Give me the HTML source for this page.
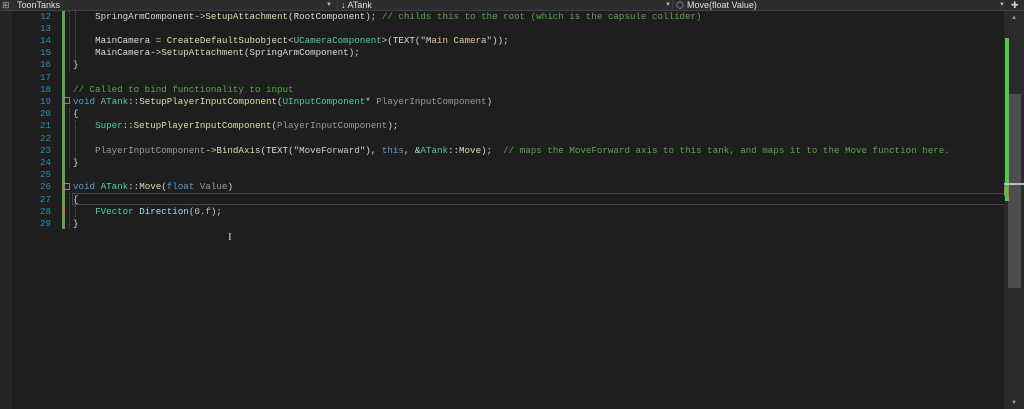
<!DOCTYPE html>
<html><head><meta charset="utf-8"><style>
html,body{margin:0;padding:0;width:1024px;height:409px;overflow:hidden;background:#1e1e1e;position:relative;font-family:"Liberation Sans",sans-serif}
.top{position:absolute;left:0;top:0;width:1024px;height:10px;background:#2d2d30;border-bottom:1px solid #3f3f46;font-size:9px;color:#e0e0e0;line-height:10px}
.top span{position:absolute;top:0}
.gut{position:absolute;left:0;top:11px;width:12px;height:398px;background:#252526}
.ln{position:absolute;left:14px;width:37px;text-align:right;font-family:"Liberation Mono",monospace;font-size:9.2px;color:#2b91af;line-height:12.2px}
.code{position:absolute;left:73px;font-family:"Liberation Mono",monospace;font-size:9.2px;color:#d4d4d4;white-space:pre;line-height:12.2px}
.c{color:#57a64a}.t{color:#4ec9b0}.k{color:#569cd6}.f{color:#dcdcaa}.s{color:#e0c8b0}.p{color:#9a9a9a}.m{color:#b5cea8}.v{color:#dadada}.l{color:#9cdcfe}
.green{position:absolute;left:62px;top:11px;width:3px;height:218px;background:#57a64a}
.box{position:absolute;width:5px;height:5px;border:1px solid #888}
.guide{position:absolute;border-left:1px dotted #555}
</style></head><body>
<div class="top">
<span style="left:2px;color:#aaa">⊞</span><span style="left:17px">ToonTanks</span>
<span style="left:326px;font-size:6px;color:#bbb">▼</span>
<div style="position:absolute;left:337px;top:0;width:1px;height:10px;background:#3f3f46"></div>
<span style="left:341px">↓ ATank</span>
<span style="left:665px;font-size:6px;color:#bbb">▼</span>
<div style="position:absolute;left:672px;top:0;width:1px;height:10px;background:#3f3f46"></div>
<span style="left:676px;color:#aaa">⬡</span><span style="left:687px">Move(float Value)</span>
<span style="left:999px;font-size:6px;color:#bbb">▼</span>
<span style="left:1011px;color:#ccc">✚</span>
</div>
<div class="gut"></div>
<div class="green"></div>
<div style="position:absolute;left:63px;top:205px;width:2px;height:11px;background:#c07a30"></div>
<div class="guide" style="left:69px;top:11px;height:60px"></div>
<div class="guide" style="left:69px;top:108px;height:60px"></div>
<div class="guide" style="left:69px;top:193px;height:36px"></div>
<div class="guide" style="left:75px;top:11px;height:48px"></div>
<div class="guide" style="left:75px;top:120px;height:38px"></div>
<div class="guide" style="left:75px;top:205px;height:12px"></div>
<div class="box" style="left:63px;top:97px"></div>
<div class="box" style="left:63px;top:183px"></div>
<div style="position:absolute;left:72px;top:193px;width:933px;height:10px;border:1px solid #464646"></div>
<div class="ln" style="top:10.5px">12<br>13<br>14<br>15<br>16<br>17<br>18<br>19<br>20<br>21<br>22<br>23<br>24<br>25<br>26<br>27<br>28<br>29</div>
<div class="code" style="top:10.5px">    <span class="v">SpringArmComponent</span>-&gt;<span class="f">SetupAttachment</span>(<span class="v">RootComponent</span>); <span class="c">// childs this to the root (which is the capsule collider)</span>

    <span class="v">MainCamera</span> = <span class="f">CreateDefaultSubobject</span>&lt;<span class="t">UCameraComponent</span>&gt;(<span class="v">TEXT</span>(<span class="s">"Main Camera"</span>));
    <span class="v">MainCamera</span>-&gt;<span class="f">SetupAttachment</span>(<span class="v">SpringArmComponent</span>);
}

<span class="c">// Called to bind functionality to input</span>
<span class="k">void</span> <span class="t">ATank</span>::<span class="f">SetupPlayerInputComponent</span>(<span class="t">UInputComponent</span>* <span class="p">PlayerInputComponent</span>)
{
    <span class="t">Super</span>::<span class="f">SetupPlayerInputComponent</span>(<span class="p">PlayerInputComponent</span>);

    <span class="p">PlayerInputComponent</span>-&gt;<span class="f">BindAxis</span>(<span class="v">TEXT</span>(<span class="s">"MoveForward"</span>), <span class="k">this</span>, &amp;<span class="t">ATank</span>::<span class="f">Move</span>);  <span class="c">// maps the MoveForward axis to this tank, and maps it to the Move function here.</span>
}

<span class="k">void</span> <span class="t">ATank</span>::<span class="f">Move</span>(<span class="k">float</span> <span class="p">Value</span>)
{
    <span class="t">FVector</span> <span class="l">Direction</span>(<span class="m">0.f</span>);
}</div>
<div style="position:absolute;left:228px;top:231px;color:#ccc;font-family:'Liberation Serif',serif;font-size:11px">I</div>
<div style="position:absolute;left:1004px;top:11px;width:20px;height:398px;background:#2a2a2b"></div>
<div style="position:absolute;left:1011px;top:15px;color:#999;font-size:6px">▲</div>
<div style="position:absolute;left:1011px;top:400px;color:#999;font-size:6px">▼</div>
<div style="position:absolute;left:1008px;top:94px;width:13px;height:194px;background:#4d4d4d"></div>
<div style="position:absolute;left:1005px;top:38px;width:4px;height:163px;background:#4ec94e"></div>
<div style="position:absolute;left:1004px;top:183px;width:20px;height:2px;background:#bbb"></div>
<div style="position:absolute;left:1004px;top:186px;width:3px;height:8px;border:1px solid #b08030"></div>
</body></html>
